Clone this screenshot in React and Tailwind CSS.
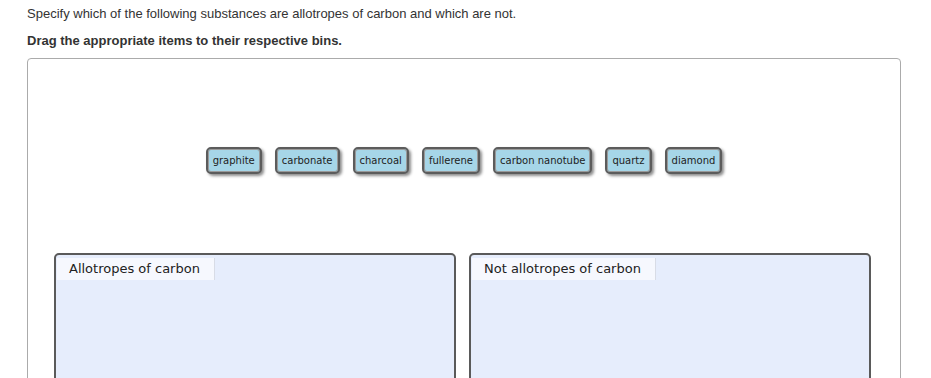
const items = ['graphite', 'carbonate', 'charcoal', 'fullerene', 'carbon nanotube', 'quartz', 'diamond'];

const Chip = ({ label }) => (
  <div className="h-[27px] px-[5px] flex items-center rounded-[5px] border-[2px] border-[#5c5c5c] bg-[#a6d6e8] shadow-[inset_0_0_0_1px_#9a9a9a,2px_2px_3px_rgba(0,0,0,0.45)] text-[10px] text-[#222] whitespace-nowrap">
    {label}
  </div>
);

const Bin = ({ title }) => (
  <div className="flex-1 h-[140px] rounded-[5px] border-[2px] border-[#5a5a5a] bg-[#e6edfc] p-px">
    <div className="inline-block bg-[#f6f8fe] border-r border-[#d8dce6] pl-[12px] pr-[14px] h-[22px] leading-[22px] text-[13px] text-[#222]">
      {title}
    </div>
  </div>
);

export default function App() {
  return (
    <div className="w-[931px] h-[378px] overflow-hidden bg-white" style={{ fontFamily: '"Liberation Sans", Arial, sans-serif' }}>
      <div className="pl-[27px] pt-[6px] text-[13px] text-[#333]">
        <p className="leading-[15px]">Specify which of the following substances are allotropes of carbon and which are not.</p>
        <p className="mt-[12px] leading-[15px] font-bold">Drag the appropriate items to their respective bins.</p>
      </div>
      <div className="ml-[27px] mt-[10px] w-[874px] h-[340px] border border-[#ababab] rounded-[4px]" style={{ fontFamily: '"DejaVu Sans", Verdana, sans-serif' }}>
        <div className="pt-[88px] flex justify-center gap-[13px]">
          {items.map((it) => (
            <Chip key={it} label={it} />
          ))}
        </div>
        <div className="mt-[79px] pl-[26px] pr-[29px] flex gap-[13px]">
          <Bin title="Allotropes of carbon" />
          <Bin title="Not allotropes of carbon" />
        </div>
      </div>
    </div>
  );
}
